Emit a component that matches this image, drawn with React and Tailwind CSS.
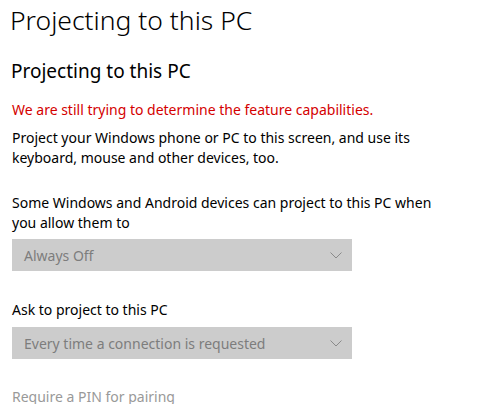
import React from "react";

function Chevron() {
  return (
    <svg width="12" height="7" viewBox="0 0 12 7" className="shrink-0">
      <path d="M0.5 0.5 L6 6 L11.5 0.5" fill="none" stroke="#8a8a8a" strokeWidth="1" />
    </svg>
  );
}

function Select({ label }) {
  return (
    <div className="w-[340px] h-[32px] bg-[#cccccc] flex items-center justify-between pl-[12px] pr-[10px] text-[14px] text-[#7d7d7d]">
      <span>{label}</span>
      <Chevron />
    </div>
  );
}

export default function App() {
  return (
    <div
      className="w-[502px] h-[404px] overflow-hidden bg-white text-black pl-[12px]"
      style={{ fontFamily: '"Noto Sans", "Open Sans", sans-serif' }}
    >
      <h1 className="text-[26.5px] font-light leading-[36px] pt-[2px] -ml-[2px]">Projecting to this PC</h1>
      <h2 className="text-[19px] leading-[26px] mt-[20px] -ml-[1px]">Projecting to this PC</h2>
      <p className="text-[14px] leading-[20px] text-[#d40000] mt-[16px]">
        We are still trying to determine the feature capabilities.
      </p>
      <p className="text-[14px] leading-[20px] mt-[8px] whitespace-nowrap">
        Project your Windows phone or PC to this screen, and use its
        <br />
        keyboard, mouse and other devices, too.
      </p>
      <p className="text-[14px] leading-[20px] mt-[25px] whitespace-nowrap">
        Some Windows and Android devices can project to this PC when
        <br />
        you allow them to
      </p>
      <div className="mt-[6px]">
        <Select label="Always Off" />
      </div>
      <p className="text-[14px] leading-[20px] mt-[29px]">Ask to project to this PC</p>
      <div className="mt-[7px]">
        <Select label="Every time a connection is requested" />
      </div>
      <p className="text-[14px] leading-[20px] mt-[28px] text-[#999999]">Require a PIN for pairing</p>
    </div>
  );
}
